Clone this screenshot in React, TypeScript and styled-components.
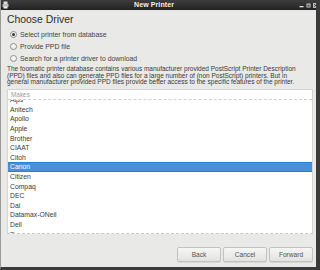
import React from "react";
import styled, { createGlobalStyle } from "styled-components";

const makes = [
  "Alps",
  "Anitech",
  "Apollo",
  "Apple",
  "Brother",
  "CIAAT",
  "Citoh",
  "Canon",
  "Citizen",
  "Compaq",
  "DEC",
  "Dai",
  "Datamax-ONeil",
  "Dell",
  "Dymo",
];

const GlobalStyle = createGlobalStyle`
  html, body {
    margin: 0;
    padding: 0;
    background: #e9e9e7;
  }
  * {
    box-sizing: border-box;
  }
`;

const Window = styled.div`
  width: 320px;
  height: 270px;
  display: flex;
  flex-direction: column;
  background: #e9e9e7;
  border-left: 1px solid #9a9a98;
  border-right: 4px solid #3a3a3a;
  border-bottom: 3px solid #3a3a3a;
  font-family: "Liberation Sans", Arial, sans-serif;
  color: #3c3c3c;
  overflow: hidden;
`;

const TitleBar = styled.div`
  height: 10px;
  flex: none;
  display: flex;
  align-items: center;
  justify-content: space-between;
  padding: 0 2px;
  margin-left: -1px;
  margin-right: -4px;
  background: linear-gradient(#3d3d3d, #222);
`;

const Title = styled.span`
  color: #f2f2f2;
  font-weight: bold;
  font-size: 7px;
  line-height: 10px;
  letter-spacing: 0.1px;
`;

const WinButtons = styled.div`
  display: flex;
  gap: 2px;
  align-items: center;
`;

const Body = styled.div`
  flex: 1;
  display: flex;
  flex-direction: column;
  padding: 4px 3px 0 6px;
`;

const Heading = styled.div`
  font-size: 10.4px;
  line-height: 12px;
  color: #2e2e2e;
  height: 14px;
`;

const RadioRow = styled.label`
  display: flex;
  align-items: center;
  height: 12px;
  font-size: 6.9px;
  color: #444;
  gap: 3px;
  padding-left: 3px;
`;

const RadioCircle = styled.span<{ $checked?: boolean }>`
  width: 7px;
  height: 7px;
  border-radius: 50%;
  border: 1px solid #8e8e8e;
  background: linear-gradient(#ffffff, #ececec);
  display: flex;
  align-items: center;
  justify-content: center;

  &::after {
    content: "";
    width: 3px;
    height: 3px;
    border-radius: 50%;
    background: ${({ $checked }) => ($checked ? "#333" : "transparent")};
  }
`;

const Description = styled.p`
  margin: 2px 0 0 0;
  font-size: 6.5px;
  line-height: 6.6px;
  white-space: nowrap;
  color: #3a3a3a;
`;

const ListBox = styled.div`
  margin-top: 3px;
  height: 145px;
  display: flex;
  flex-direction: column;
  background: #fff;
  border: 1px solid #d4d4d2;
  border-bottom: 1px dashed #c8c8c8;
`;

const ListHeader = styled.div`
  height: 10px;
  flex: none;
  font-size: 6.4px;
  line-height: 10px;
  padding-left: 3px;
  color: #9a9a9a;
  border-bottom: 1px dashed #d0d0d0;
`;

const Rows = styled.div`
  flex: 1;
  overflow: hidden;
`;

const RowsInner = styled.div`
  margin-top: -4.6px;
`;

const Row = styled.div<{ $selected?: boolean }>`
  height: 9.6px;
  line-height: 9.6px;
  font-size: 6.8px;
  padding-left: 2px;
  color: ${({ $selected }) => ($selected ? "#fff" : "#3a3a3a")};
  background: ${({ $selected }) => ($selected ? "#4a8fd8" : "transparent")};
  box-shadow: ${({ $selected }) =>
    $selected ? "inset 0 1px 0 #2f7bd0, inset 0 -1px 0 #2f7bd0" : "none"};
`;

const Footer = styled.div`
  display: flex;
  justify-content: flex-end;
  gap: 2px;
  margin-top: 13px;
`;

const Button = styled.button`
  width: 44px;
  height: 15px;
  padding: 0;
  font-family: "Liberation Sans", Arial, sans-serif;
  font-size: 6.6px;
  color: #555;
  border: 1px solid #c2c2c0;
  border-radius: 2px;
  background: linear-gradient(#f6f6f5, #e2e2e0);
  box-shadow: 0 1px 0 #d6d6d4;
`;

function PrinterIcon() {
  return (
    <svg width="7" height="8" viewBox="0 0 7 8">
      <rect x="1.5" y="0.5" width="4" height="2.5" fill="#ddd" />
      <rect x="0.5" y="3" width="6" height="3" rx="0.5" fill="#bbb" />
      <rect x="1.5" y="5.5" width="4" height="2" fill="#eee" />
    </svg>
  );
}

function WindowControls() {
  return (
    <WinButtons>
      <svg width="5" height="5" viewBox="0 0 5 5">
        <rect x="0.5" y="3" width="4" height="1.3" fill="#ddd" />
      </svg>
      <svg width="5" height="5" viewBox="0 0 5 5">
        <rect x="0.5" y="0.5" width="4" height="4" fill="#ccc" />
        <rect x="1.3" y="1.6" width="2.4" height="2.1" fill="#555" />
      </svg>
      <svg width="5" height="5" viewBox="0 0 5 5">
        <rect x="0" y="0" width="5" height="5" fill="#bbb" />
        <path d="M1.2 1.2 L3.8 3.8 M3.8 1.2 L1.2 3.8" stroke="#333" strokeWidth="0.9" />
      </svg>
    </WinButtons>
  );
}

export default function App() {
  return (
    <>
      <GlobalStyle />
      <Window>
        <TitleBar>
          <PrinterIcon />
          <Title>New Printer</Title>
          <WindowControls />
        </TitleBar>
        <Body>
          <Heading>Choose Driver</Heading>
          <RadioRow>
            <RadioCircle $checked />
            Select printer from database
          </RadioRow>
          <RadioRow>
            <RadioCircle />
            Provide PPD file
          </RadioRow>
          <RadioRow>
            <RadioCircle />
            Search for a printer driver to download
          </RadioRow>
          <Description>
            The foomatic printer database contains various manufacturer
            provided PostScript Printer Description
            <br />
            (PPD) files and also can generate PPD files for a large number of
            (non PostScript) printers. But in
            <br />
            general manufacturer provided PPD files provide better access to
            the specific features of the printer.
          </Description>
          <ListBox>
            <ListHeader>Makes</ListHeader>
            <Rows>
              <RowsInner>
                {makes.map((m) => (
                  <Row key={m} $selected={m === "Canon"}>
                    {m}
                  </Row>
                ))}
              </RowsInner>
            </Rows>
          </ListBox>
          <Footer>
            <Button>Back</Button>
            <Button>Cancel</Button>
            <Button>Forward</Button>
          </Footer>
        </Body>
      </Window>
    </>
  );
}
